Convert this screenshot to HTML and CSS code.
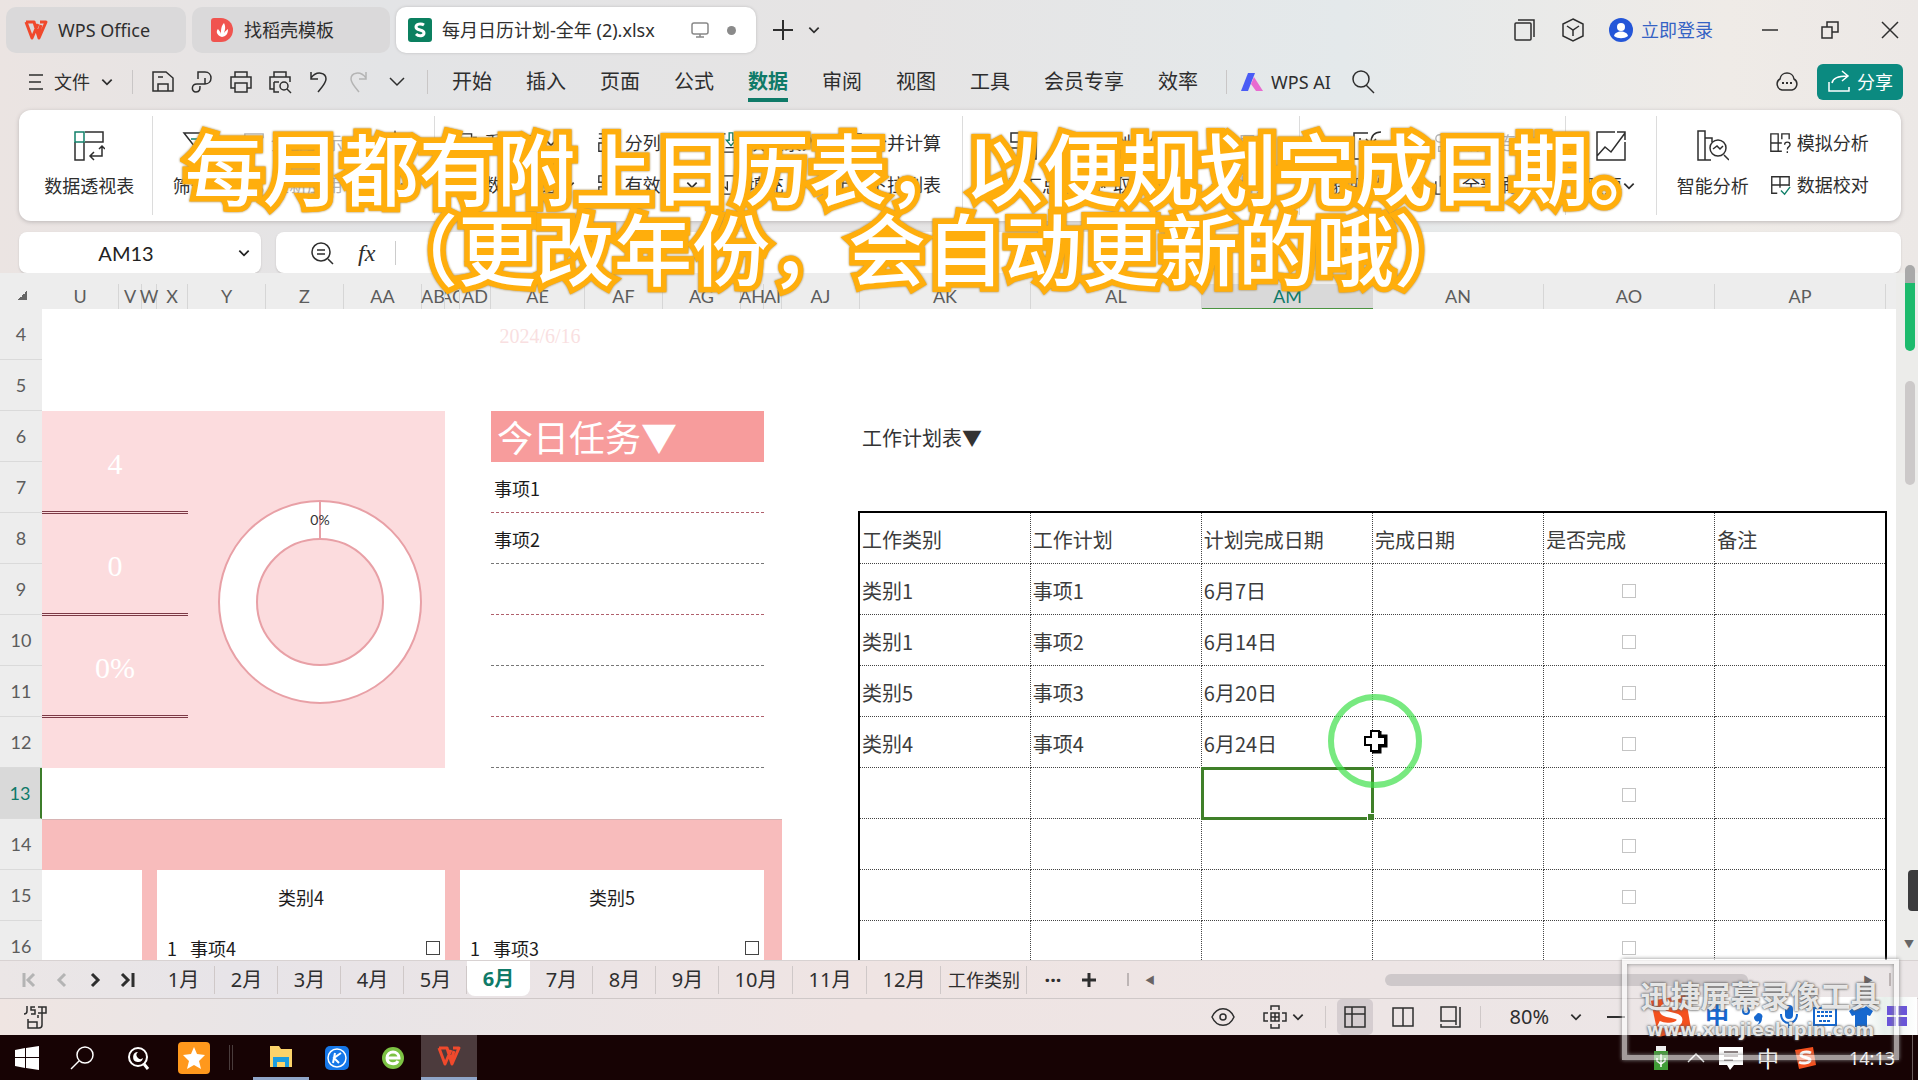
FILE: index.html
```html
<!DOCTYPE html>
<html lang="zh-CN">
<head>
    <meta charset="UTF-8">
    <meta name="viewport" content="width=device-width, initial-scale=1.0">
    <title>每月日历计划-全年 (2).xlsx</title>
    <link rel="stylesheet" href="styles.css">
</head>
<body>
    <svg class="sprite">
        <symbol id="chevron" viewBox="0 0 12 12"><path d="M2 4l4 4 4-4"/></symbol>
        <symbol id="wps" viewBox="0 0 24 20"><path d="M2 2h8l4 12 3-9M2 2l6 16 6-14M10 2l5 16 7-16h-6" fill="none" stroke="#f0492c" stroke-width="3" stroke-linejoin="round"/></symbol>
        <symbol id="search" viewBox="0 0 24 24"><circle cx="10" cy="9" r="8"/><path d="M15 15l8 8"/></symbol>
        <symbol id="sogou" viewBox="0 0 24 24"><path d="M2 4l18-3 3 18-17 4z" fill="#f4511e" stroke="none"/><path d="M18 7c-4-2-10-1-10 2s9 2 9 5-7 4-11 2" fill="none" stroke="#fff" stroke-width="3"/></symbol>
    </svg>

    <!-- title bar -->
    <header class="titlebar">
        <button class="doc-tab tab-home"><svg class="icon-wps"><use href="#wps"/></svg>WPS Office</button>
        <button class="doc-tab tab-docer">
            <svg class="icon-doc" viewBox="0 0 22 24"><path d="M0 3q0-3 3-3h7a12 12 0 010 24H3q-3 0-3-3z" fill="#f0544f" stroke="none"/><path d="M11 19c-6-2-6-6-4-8 1 2 3 3 3 5 0-4 0-8 3-11 2 4 1 7 0 10 1-2 3-3 4-4 0 4-1 7-6 8z" fill="#fff" stroke="none"/></svg>找稻壳模板
        </button>
        <button class="doc-tab tab-file active">
            <svg class="icon-doc" viewBox="0 0 24 24"><rect width="24" height="24" rx="3" fill="#0b8060" stroke="none"/><path d="M16 7c-3-2-8-1-8 2 0 4 8 2 8 6 0 3-5 4-8 1" fill="none" stroke="#fff" stroke-width="3"/></svg>
            <span class="file-name">每月日历计划-全年 (2).xlsx</span>
            <svg class="icon-small" viewBox="0 0 18 18"><rect x="1" y="2" width="16" height="11" rx="2"/><path d="M5 16h8M9 13v3"/></svg>
            <span class="dot"></span>
        </button>
        <button class="new-tab" aria-label="新建"><svg class="icon" viewBox="0 0 24 24"><path d="M12 2v20M2 12h20" stroke-width="2"/></svg></button>
        <button aria-label="更多"><svg class="icon-chev"><use href="#chevron"/></svg></button>
        <div class="window-tools">
            <button aria-label="窗口"><svg class="icon" viewBox="0 0 24 24"><rect x="2" y="5" width="16" height="17" rx="1"/><path d="M5 2h16v17"/></svg></button>
            <button aria-label="应用"><svg class="icon" viewBox="0 0 24 24"><path d="M12 1l10 5v12l-10 5-10-5V6zM6 8l6 4 6-4M12 12v6"/></svg></button>
            <button class="login"><svg class="icon" viewBox="0 0 24 24"><circle cx="12" cy="12" r="12" fill="#2456d8" stroke="none"/><circle cx="12" cy="9" r="4" fill="#fff" stroke="none"/><path d="M5 18c1-6 13-6 14 0-4 3-10 3-14 0z" fill="#fff" stroke="none"/></svg>立即登录</button>
            <button class="win" aria-label="最小化"><svg class="icon-small" viewBox="0 0 18 18"><path d="M1 9h16"/></svg></button>
            <button class="win" aria-label="还原"><svg class="icon-small" viewBox="0 0 18 18"><path d="M1 6h10v11H1zM6 6V1h11v10h-6"/></svg></button>
            <button class="win" aria-label="关闭"><svg class="icon-small" viewBox="0 0 18 18"><path d="M1 1l16 16M17 1L1 17"/></svg></button>
        </div>
    </header>

    <!-- menu -->
    <nav class="menubar">
        <button class="file-menu"><svg class="icon-small" viewBox="0 0 18 18"><path d="M3 2h14M3 9h12M3 16h14"/></svg>文件<svg class="icon-chev"><use href="#chevron"/></svg></button>
        <div class="quick">
            <button aria-label="保存"><svg class="icon" viewBox="0 0 24 24"><path d="M2 2h13l7 6v13H2zM7 21v-7h10v7M7 7h5"/></svg></button>
            <button aria-label="导出"><svg class="icon" viewBox="0 0 24 24"><path d="M8 9V2h7c8 0 8 12 0 12H7c-6 0-6 8-1 8 4 0 4-3 4-6M15 8v6"/></svg></button>
            <button aria-label="打印"><svg class="icon" viewBox="0 0 24 24"><path d="M6 7V2h12v5M6 18H2V7h20v11h-4M6 13h12v9H6z"/></svg></button>
            <button aria-label="打印预览"><svg class="icon" viewBox="0 0 24 24"><path d="M6 7V2h12v5M6 19H2V7h20v5M6 12v10h5M6 12h5"/><circle cx="16" cy="16" r="4"/><path d="M19 19l4 4"/></svg></button>
            <button aria-label="撤销"><svg class="icon" viewBox="0 0 24 24"><path d="M4 2v7h7M4 8c6-8 15-5 15 1 0 4-4 8-8 13"/></svg></button>
            <button class="off" aria-label="恢复"><svg class="icon" viewBox="0 0 24 24"><path d="M20 2v7h-7M20 8C14 0 5 3 5 9c0 4 4 8 8 13"/></svg></button>
            <button aria-label="更多命令"><svg class="icon" viewBox="0 0 24 24"><path d="M5 8l7 7 7-7"/></svg></button>
        </div>
        <div class="menu-tabs">
            <button>开始</button>
            <button>插入</button>
            <button>页面</button>
            <button>公式</button>
            <button class="active">数据</button>
            <button>审阅</button>
            <button>视图</button>
            <button>工具</button>
            <button>会员专享</button>
            <button>效率</button>
        </div>
        <div class="ai">
            <button>
                <svg class="icon" viewBox="0 0 24 20"><path d="M8 1h7L8 19H1z" fill="#4a5cf5" stroke="none"/><path d="M14 5l9 14h-7l-5-7z" fill="#e86bd0" stroke="none"/></svg>WPS AI
            </button>
            <button aria-label="搜索"><svg class="icon"><use href="#search"/></svg></button>
        </div>
        <div class="share-area">
            <button aria-label="云"><svg class="icon" viewBox="0 0 24 24"><path d="M7 20a6 6 0 01-2-11c1-8 13-8 14 0a6 6 0 01-2 11z"/><path d="M7 13h2M11 13h2M15 13h2" stroke-width="2"/></svg></button>
            <button class="share"><svg class="icon" viewBox="0 0 24 24"><path d="M2 12v9h20v-4M5 13c1-5 6-7 15-7M15 1l6 5-6 5"/></svg>分享</button>
        </div>
    </nav>

    <!-- ribbon -->
    <section class="ribbon">
        <div class="group g-pivot">
            <button class="big"><svg class="icon-big" viewBox="0 0 32 32"><path d="M12 2h18v10H12M2 12v18h9V12"/><path d="M2 2h9v10H2z" stroke="#12806a"/><path d="M29 17v9H18M26 19l3-3 3 3M21 22l-4 4 4 4"/></svg>数据透视表</button>
        </div>
        <div class="group g-filter">
            <button class="big"><svg class="icon-big" viewBox="0 0 32 32"><path d="M2 3h28L19 17v12l-6-4v-8z"/><path d="M9 9h14" stroke="#12806a"/></svg><span>筛选<svg class="icon-chev"><use href="#chevron"/></svg></span></button>
            <div class="pair off">
                <button><svg class="icon" viewBox="0 0 24 24"><path d="M2 2h20v4l-7 7v8H9v-8L2 6z"/></svg>全部显示</button>
                <button><svg class="icon" viewBox="0 0 24 24"><path d="M2 2h20l-8 9v10M18 14a4 4 0 11-3 7"/></svg>重新应用</button>
            </div>
            <button class="big"><svg class="icon-big" viewBox="0 0 32 32"><path d="M8 3v26M3 24l5 5 5-5M18 14l5-12 5 12M18 18h10L18 29h10"/></svg><span>排序<svg class="icon-chev"><use href="#chevron"/></svg></span></button>
        </div>
        <div class="group g-data">
            <div class="pair">
                <button><svg class="icon" viewBox="0 0 24 24"><path d="M2 2h15v19H2z"/><path d="M5 7h9" stroke="#12806a"/><path d="M18 6h4v15h-5"/></svg>重复项<svg class="icon-chev"><use href="#chevron"/></svg></button>
                <button><svg class="icon" viewBox="0 0 24 24"><path d="M2 3h8v18H2zM14 3h8v18h-8z"/></svg>数据对比<svg class="icon-chev"><use href="#chevron"/></svg></button>
            </div>
            <div class="pair">
                <button><svg class="icon" viewBox="0 0 24 24"><path d="M2 2h8M2 7h8M2 12h8v9H2zM14 2h8v5h-8zM14 12h8v9h-8z"/></svg>分列</button>
                <button><svg class="icon" viewBox="0 0 24 24"><path d="M2 2h8v7H2zM2 14h8v7H2zM14 6l3 3 5-6M14 18l3 3 5-6"/></svg>有效性<svg class="icon-chev"><use href="#chevron"/></svg></button>
            </div>
            <div class="pair">
                <button><svg class="icon" viewBox="0 0 24 24"><path d="M6 2H2v20h20V2h-4M6 17h12"/><path d="M10 1h4v8h3l-5 6-5-6h3z" stroke="#12806a"/></svg>快速录入</button>
                <button><svg class="icon" viewBox="0 0 24 24"><path d="M2 2h20v20H2zM8 8v9l-3-3M15 8v9l3-3"/></svg>填充<svg class="icon-chev"><use href="#chevron"/></svg></button>
            </div>
            <div class="pair">
                <button><svg class="icon" viewBox="0 0 24 24"><path d="M2 6h14v15H2zM8 2h14v13"/></svg>合并计算</button>
                <button><svg class="icon" viewBox="0 0 24 24"><path d="M2 3h20v7H2zM2 10v11h20V10M14 6h4"/></svg>下拉列表</button>
            </div>
        </div>
        <div class="group g-outline">
            <button class="big"><svg class="icon-big" viewBox="0 0 32 32"><path d="M3 3h16v9H3zM3 18h16v11H3zM23 3h5v26h-5"/></svg>分类汇总</button>
            <div class="pair">
                <button><svg class="icon" viewBox="0 0 24 24"><path d="M5 2h10v8H5zM5 14h10v8H5zM18 3h4v18h-4"/></svg>创建组</button>
                <button><svg class="icon" viewBox="0 0 24 24"><path d="M5 2h10v8H5zM5 14h10v8H5zM18 9l4 6M22 9l-4 6"/></svg>取消组合</button>
            </div>
            <div class="pair off">
                <button><svg class="icon" viewBox="0 0 24 24"><path d="M2 2h12v8H2zM18 6h5"/></svg>展开</button>
                <button><svg class="icon" viewBox="0 0 24 24"><path d="M2 12h12v8H2zM18 16h5"/></svg>折叠</button>
            </div>
        </div>
        <div class="group g-import">
            <button class="big"><svg class="icon-big" viewBox="0 0 32 32"><path d="M17 3H3v26h26V17M8 9h2M8 15h2M8 21h2M14 21h10M30 2c-7 0-10 4-10 11M15 9l5 5 5-5"/></svg>获取数据</button>
            <div class="pair">
                <button class="off"><svg class="icon" viewBox="0 0 24 24"><path d="M6 3h10a4 4 0 010 8H6a4 4 0 010-8zM5 16h9v5H5z"/></svg>编辑连接</button>
                <button><svg class="icon" viewBox="0 0 24 24"><path d="M2 8v14h6M7 2h14v9M7 2v12"/><path d="M21 18a5 5 0 11-2-4" stroke="#12806a"/></svg>全部刷新</button>
            </div>
        </div>
        <div class="group g-stock">
            <button class="big"><svg class="icon-big" viewBox="0 0 32 32"><path d="M20 2H2v28h28V12M2 26l8-9 6 5L30 3M22 2h8v8"/></svg><span>股票<svg class="icon-chev"><use href="#chevron"/></svg></span></button>
        </div>
        <div class="group g-analysis">
            <button class="big"><svg class="icon-big" viewBox="0 0 32 32"><path d="M1 1h7v29H1zM8 8h7v4M8 30h6M27 25l5 5"/><circle cx="21" cy="18" r="8"/><path d="M16 19l4-3 3 3 3-3"/></svg>智能分析</button>
            <div class="pair">
                <button><svg class="icon" viewBox="0 0 24 24"><path d="M10 12V2H2v10h12M14 8V2h8v6M2 12v9h12M10 12v9"/><path d="M17 14c0-4 6-4 6 0 0 2-3 2-3 5M20 21v2"/></svg>模拟分析</button>
                <button><svg class="icon" viewBox="0 0 24 24"><path d="M9 21H3V3h19v10M3 12h19M12 3v12"/><path d="M13 18l4 4 6-8" stroke="#12806a"/></svg>数据校对</button>
            </div>
        </div>
    </section>

    <!-- formula bar -->
    <section class="formula-row">
        <div class="name-box">
            <input type="text" value="AM13" aria-label="名称框">
            <svg class="icon-chev"><use href="#chevron"/></svg>
        </div>
        <div class="formula-box">
            <button aria-label="查找"><svg class="icon" viewBox="0 0 24 24"><circle cx="11" cy="11" r="9"/><path d="M7 9h8M7 13h8M18 18l5 5"/></svg></button>
            <button class="fx">fx</button>
            <input type="text" aria-label="编辑栏">
        </div>
    </section>

    <!-- sheet -->
    <main class="sheet">
        <div class="corner"></div>
        <div class="col-heads">
            <span>U</span><span>V</span><span>W</span><span>X</span><span>Y</span><span>Z</span><span>AA</span><span>AB</span><span class="narrow">AC</span><span>AD</span><span>AE</span><span>AF</span><span>AG</span><span>AH</span><span>AI</span><span>AJ</span><span>AK</span><span>AL</span><span class="selected">AM</span><span>AN</span><span>AO</span><span>AP</span>
        </div>
        <div class="row-heads">
            <span>4</span><span>5</span><span>6</span><span>7</span><span>8</span><span>9</span><span>10</span><span>11</span><span>12</span><span class="selected">13</span><span>14</span><span>15</span><span>16</span>
        </div>
        <div class="cells">
            <div class="today">2024/6/16</div>

            <div class="summary">
                <div class="stats">
                    <div>4</div>
                    <div>0</div>
                    <div>0%</div>
                </div>
                <svg class="donut" viewBox="0 0 206 206">
                    <circle cx="103" cy="103" r="82" fill="none" stroke="#fff" stroke-width="38"/>
                    <g fill="none" stroke="#e8a0a6" stroke-width="2">
                        <circle cx="103" cy="103" r="101"/>
                        <circle cx="103" cy="103" r="63"/>
                        <path d="M103 2v38"/>
                    </g>
                    <text x="103" y="26" text-anchor="middle">0%</text>
                </svg>
            </div>

            <div class="task-title">今日任务▼</div>
            <ul class="tasks">
                <li>事项1</li>
                <li>事项2</li>
                <li></li>
                <li></li>
                <li></li>
                <li></li>
            </ul>

            <div class="board"></div>
            <div class="card card-left"></div>
            <div class="card card-4">
                <h3>类别4</h3>
                <label><b>1</b>事项4<input type="checkbox"></label>
            </div>
            <div class="card card-5">
                <h3>类别5</h3>
                <label><b>1</b>事项3<input type="checkbox"></label>
            </div>

            <div class="plan-title">工作计划表▼</div>
            <table class="plan">
                <tr><th>工作类别</th><th>工作计划</th><th>计划完成日期</th><th>完成日期</th><th>是否完成</th><th>备注</th></tr>
                <tr><td>类别1</td><td>事项1</td><td>6月7日</td><td></td><td class="check"><input type="checkbox" aria-label="是否完成"></td><td></td></tr>
                <tr><td>类别1</td><td>事项2</td><td>6月14日</td><td></td><td class="check"><input type="checkbox" aria-label="是否完成"></td><td></td></tr>
                <tr><td>类别5</td><td>事项3</td><td>6月20日</td><td></td><td class="check"><input type="checkbox" aria-label="是否完成"></td><td></td></tr>
                <tr><td>类别4</td><td>事项4</td><td>6月24日</td><td></td><td class="check"><input type="checkbox" aria-label="是否完成"></td><td></td></tr>
                <tr><td></td><td></td><td></td><td></td><td class="check"><input type="checkbox" aria-label="是否完成"></td><td></td></tr>
                <tr><td></td><td></td><td></td><td></td><td class="check"><input type="checkbox" aria-label="是否完成"></td><td></td></tr>
                <tr><td></td><td></td><td></td><td></td><td class="check"><input type="checkbox" aria-label="是否完成"></td><td></td></tr>
                <tr><td></td><td></td><td></td><td></td><td class="check"><input type="checkbox" aria-label="是否完成"></td><td></td></tr>
            </table>
            <div class="selection">
                <svg class="pointer" viewBox="0 0 96 96">
                    <circle cx="48" cy="48" r="44" fill="none" stroke="#3fe04a" stroke-opacity=".7" stroke-width="6"/>
                    <path d="M53 38v5h6v10h-6v6h-8" fill="none" stroke="#000" stroke-width="3"/>
                    <path d="M44 38h8v6h6v8h-6v6h-8v-6h-6v-8h6z" fill="#fff" stroke="#000" stroke-width="2"/>
                </svg>
            </div>
        </div>
        <div class="vscroll">
            <i class="level"></i>
            <i class="thumb"></i>
            <i class="handle"></i>
            <i class="down">▼</i>
        </div>
    </main>

    <!-- sheet tabs -->
    <nav class="sheet-tabs">
        <div class="tab-nav">
            <button class="off" aria-label="第一张"><svg class="icon-small" viewBox="0 0 18 18"><path d="M4 2v14M14 3L8 9l6 6"/></svg></button>
            <button class="off" aria-label="上一张"><svg class="icon-small" viewBox="0 0 18 18"><path d="M12 3L6 9l6 6"/></svg></button>
            <button aria-label="下一张"><svg class="icon-small" viewBox="0 0 18 18"><path d="M6 3l6 6-6 6"/></svg></button>
            <button aria-label="最后一张"><svg class="icon-small" viewBox="0 0 18 18"><path d="M3 3l6 6-6 6M14 2v14"/></svg></button>
        </div>
        <button class="tab">1月</button>
        <button class="tab">2月</button>
        <button class="tab">3月</button>
        <button class="tab">4月</button>
        <button class="tab">5月</button>
        <button class="tab active">6月</button>
        <button class="tab">7月</button>
        <button class="tab">8月</button>
        <button class="tab">9月</button>
        <button class="tab wide">10月</button>
        <button class="tab wide">11月</button>
        <button class="tab wide">12月</button>
        <button class="tab long">工作类别</button>
        <button class="more">···</button>
        <button class="more" aria-label="新建工作表"><svg class="icon-small" viewBox="0 0 18 18"><path d="M9 2v14M2 9h14" stroke-width="3"/></svg></button>
        <div class="hscroll">
            <i class="bar"></i><i class="arrow">◀</i><div class="track"><i></i></div><i class="arrow">▶</i><i class="bar"></i>
        </div>
    </nav>

    <!-- status bar -->
    <footer class="status">
        <svg class="icon jst" viewBox="0 0 24 24"><path d="M3 1v5q0 3-3 3M11 2H7v3h4v4H7M14 2h8v6h-8M18 2v18q0 3-3 3H4v-9M4 17h9v6M14 13v-3"/></svg>
        <div class="status-right">
            <button class="eye" aria-label="护眼"><svg class="icon" viewBox="0 0 24 24"><path d="M1 12c5-11 17-11 22 0-5 11-17 11-22 0z"/><circle cx="12" cy="12" r="3"/></svg></button>
            <button class="cross" aria-label="阅读"><svg class="icon" viewBox="0 0 24 24"><path d="M8 8h8v8H8zM8 5V1h8v4M8 19v4h8v-4M5 8H1v8h4M19 8h4v8h-4M12 8v8M8 12h8"/></svg><svg class="icon-chev"><use href="#chevron"/></svg></button>
            <div class="views">
                <button class="active" aria-label="普通视图"><svg class="icon" viewBox="0 0 24 24"><path d="M2 2h20v20H2zM2 9h20M9 2v20"/></svg></button>
                <button aria-label="分页预览"><svg class="icon" viewBox="0 0 24 24"><path d="M2 3h20v18H2zM12 3v18"/></svg></button>
                <button aria-label="页面布局"><svg class="icon" viewBox="0 0 24 24"><path d="M2 2h15v14H2zM21 2v20H2v-3M17 20v-4"/></svg></button>
            </div>
            <button class="zoom">80%<svg class="icon-chev"><use href="#chevron"/></svg></button>
            <button class="minus" aria-label="缩小"><svg class="icon-small" viewBox="0 0 18 18"><path d="M0 9h18" stroke-width="2"/></svg></button>
        </div>
    </footer>

    <!-- taskbar -->
    <footer class="taskbar">
        <button aria-label="开始"><svg class="icon" viewBox="0 0 24 24"><path d="M0 4l10-2v9H0zM11 2l13-2v11H11zM0 12h10v10L0 20zM11 12h13v12l-13-2z" fill="#fff" stroke="none"/></svg></button>
        <button aria-label="搜索"><svg class="icon" viewBox="0 0 24 24"><circle cx="15" cy="9" r="8"/><path d="M9 15l-8 8"/></svg></button>
        <button aria-label="查找"><svg class="icon" viewBox="0 0 24 24"><circle cx="12" cy="11" r="9" stroke-width="2"/><path d="M18 18l4 5" stroke-width="3"/><path d="M12 6a5 5 0 105 6 3 3 0 01-5-6z" fill="#fff" stroke="none"/></svg></button>
        <button aria-label="收藏"><svg class="icon-big" viewBox="0 0 32 32"><rect width="32" height="32" rx="4" fill="#ff981c" stroke="none"/><path d="M16 5l3 7 8 1-6 6 2 8-7-4-7 4 2-8-6-6 8-1z" fill="#fff" stroke="none"/></svg></button>
        <i class="split"></i>
        <button class="running" aria-label="文件夹"><svg class="icon" viewBox="0 0 24 24"><path d="M1 2h9l2 3h11v18H1z" fill="#fbd36a" stroke="none"/><path d="M4 13h16v10h-4v-5H8v5H4z" fill="#1c9de0" stroke="none"/></svg></button>
        <button aria-label="K"><svg class="icon" viewBox="0 0 24 24"><rect width="24" height="24" rx="5" fill="#1677e8" stroke="none"/><circle cx="12" cy="12" r="9"/><path d="M10 7l-2 10M16 7l-7 5 5 5" stroke-width="2"/></svg></button>
        <button aria-label="浏览器"><svg class="icon" viewBox="0 0 24 24"><circle cx="12" cy="12" r="11" fill="#7cc243" stroke="none"/><path d="M6 12h12c0-8-12-8-12 0 0 7 9 7 11 3" stroke-width="3"/></svg></button>
        <button class="running current" aria-label="WPS"><svg class="icon-wps"><use href="#wps"/></svg></button>
        <div class="tray">
            <svg class="icon" viewBox="0 0 24 24"><path d="M7 0h10v5H7z" fill="#eee" stroke="none"/><path d="M5 5h14v19H5z" fill="#3f9c35" stroke="none"/><path d="M12 8v13M8 12v3l4 3 4-3v-3"/></svg>
            <svg class="icon-small" viewBox="0 0 18 18"><path d="M1 13l8-8 8 8"/></svg>
            <svg class="icon" viewBox="0 0 24 24"><path d="M0 1h24v18h-9l-4 5-3-5H0z" fill="#fff" stroke="none"/><path d="M5 6h14M5 10h14M5 14h9" stroke="#170304" stroke-width="1"/></svg>
            <span class="ime">中</span>
            <svg class="icon"><use href="#sogou"/></svg>
            <time>14:13</time>
        </div>
    </footer>

    <!-- input method bar -->
    <div class="ime-bar">
        <svg class="ime-logo"><use href="#sogou"/></svg>
        <b>中</b>
        <svg class="icon" viewBox="0 0 24 24"><circle cx="5" cy="7" r="3" fill="none" stroke="#1668cf" stroke-width="2"/><path d="M15 11a3 3 0 116 3c0 4-2 6-5 7 2-2 2-3 2-4a3 3 0 01-3-6z"/></svg>
        <svg class="icon" viewBox="0 0 24 24"><rect x="8" y="1" width="8" height="14" rx="4"/><path d="M4 10c0 12 16 12 16 0M12 19v5" fill="none" stroke="#1668cf" stroke-width="2"/></svg>
        <svg class="icon" viewBox="0 0 24 24"><path d="M1 4h22v17H1z" fill="none" stroke="#1668cf" stroke-width="2"/><path d="M4 8h16M4 12h16M6 17h12" stroke="#1668cf" stroke-width="2" stroke-dasharray="3 1"/></svg>
        <svg class="icon" viewBox="0 0 24 24"><path d="M7 2c2 3 8 3 10 0l7 5-3 5-3-1v12H6V11l-3 1-3-5z"/></svg>
        <svg class="icon" viewBox="0 0 24 24"><path d="M2 2h9v9H2zM13 2h9v9h-9zM2 13h9v9H2zM13 13h9v9h-9z" fill="#6a55d8"/></svg>
    </div>

    <!-- recorder mark -->
    <div class="mark">
        <strong>迅捷屏幕录像工具</strong>
        <span>www.xunjieshipin.com</span>
    </div>

    <!-- video caption -->
    <p class="caption">每月都有附上日历表，以便规划完成日期。<br>（更改年份，会自动更新的哦）</p>
</body>
</html>
```
FILE: styles.css
```css
* {
    margin: 0;
    padding: 0;
    box-sizing: border-box;
}

body {
    display: flex;
    flex-direction: column;
    position: relative;
    height: 100vh;
    overflow: hidden;
    font-family: "Noto Sans", "Noto Sans CJK SC", sans-serif;
    font-size: 18px;
    line-height: 24px;
    color: #2e2e2e;
    background: linear-gradient(90deg, #ebe4e2, #e3e4e6 20%, #e6e4e4 45%, #e4e9eb 70%, #efebe7 90%, #ece8e6);
}

button {
    display: flex;
    align-items: center;
    justify-content: center;
    border: none;
    background: none;
    font: inherit;
    color: inherit;
    white-space: nowrap;
}

input {
    border: none;
    background: none;
    font: inherit;
    color: inherit;
}

svg {
    flex: none;
    fill: none;
    stroke: currentColor;
    stroke-width: 1.5;
}

.sprite {
    position: absolute;
    width: 0;
    height: 0;
}

.icon {
    width: 24px;
    height: 24px;
}

.icon-small {
    width: 18px;
    height: 18px;
}

.icon-big {
    width: 32px;
    height: 32px;
}

.icon-chev {
    width: 14px;
    height: 14px;
}

.icon-wps {
    width: 24px;
    height: 20px;
}

.off {
    color: #b4b4b4;
}

/* title bar */
.titlebar {
    display: flex;
    align-items: center;
    height: 58px;
    padding: 2px 19px 0 6px;
}

.doc-tab {
    height: 46px;
    justify-content: flex-start;
    gap: 10px;
    padding: 0 18px;
    margin-right: 6px;
    border-radius: 10px;
    background: #dad9da;
}

.tab-home {
    width: 180px;
}

.tab-docer {
    width: 198px;
}

.tab-file {
    width: 360px;
    padding: 0 12px;
}

.doc-tab.active {
    background: #fff;
    box-shadow: 0 0 3px #bbb;
}

.icon-doc {
    width: 24px;
    height: 24px;
}

.doc-tab .icon-small {
    color: #888;
}

.file-name {
    flex: 1;
    text-align: left;
}

.dot {
    width: 9px;
    height: 9px;
    margin: 0 8px;
    border-radius: 50%;
    background: #8a8a8a;
}

.new-tab {
    margin: 0 12px 0 9px;
}

.window-tools {
    display: flex;
    align-items: center;
    gap: 24px;
    margin-left: auto;
}

.login {
    gap: 8px;
    color: #3462c4;
}

.win {
    margin-left: 18px;
}

.login + .win {
    margin-left: 24px;
}

/* menu */
.menubar {
    display: flex;
    align-items: center;
    height: 52px;
    padding: 0 15px 4px 26px;
}

.file-menu {
    gap: 10px;
    padding-right: 18px;
    border-right: 1px solid #c9c6c6;
}

.quick {
    display: flex;
    gap: 15px;
    padding: 0 18px;
    border-right: 1px solid #c9c6c6;
}

.menu-tabs {
    display: flex;
    gap: 34px;
    padding: 0 28px 0 24px;
    font-size: 20px;
    border-right: 1px solid #c9c6c6;
}

.menu-tabs .active {
    margin: -8px 0;
    color: #0f7a68;
    font-weight: bold;
    background: linear-gradient(#0f7a68, #0f7a68) bottom / 100% 4px no-repeat;
}

.ai {
    display: flex;
    gap: 20px;
    padding-left: 13px;
}

.ai button {
    gap: 7px;
}

.share-area {
    display: flex;
    align-items: center;
    gap: 18px;
    margin-left: auto;
}

.share {
    gap: 6px;
    width: 86px;
    height: 36px;
    border-radius: 6px;
    color: #fff;
    background: #0b8a80;
}

/* ribbon */
.ribbon {
    display: flex;
    height: 111px;
    margin: 0 17px 0 19px;
    padding: 6px 0;
    border-radius: 12px;
    background: #fff;
    box-shadow: 0 1px 4px #bbb6b6;
}

.group {
    display: flex;
    align-items: center;
    justify-content: space-evenly;
    flex: 1 1 0;
    min-width: 0;
    padding-bottom: 3px;
    overflow: hidden;
}

.group + .group {
    border-left: 1px solid #dcdcdc;
}

.g-pivot {
    flex-grow: 133;
}

.g-pivot .big {
    margin-left: 8px;
}

.g-filter {
    flex-grow: 282;
}

.g-data {
    flex-grow: 529;
}

.g-outline {
    flex-grow: 337;
}

.g-import {
    flex-grow: 266;
}

.g-stock {
    flex-grow: 90;
}

.g-analysis {
    flex-grow: 245;
    justify-content: flex-start;
    gap: 20px;
}

.g-analysis .big {
    margin-left: 20px;
}

.big {
    flex-direction: column;
    gap: 12px;
}

.pair {
    display: flex;
    flex-direction: column;
    align-items: flex-start;
    gap: 18px;
}

.pair button {
    gap: 6px;
}

.pair .icon {
    width: 22px;
}

/* formula bar */
.formula-row {
    display: flex;
    gap: 15px;
    height: 41px;
    margin: 11px 17px 0 19px;
}

.name-box,
.formula-box {
    display: flex;
    align-items: center;
    border-radius: 8px;
    background: #fff;
    box-shadow: 0 1px 2px #c4c0c0;
}

.name-box {
    width: 242px;
    padding-right: 10px;
    font-family: Lato, sans-serif;
    font-size: 20px;
    color: #222;
}

.name-box input {
    flex: 1;
    min-width: 0;
    padding-right: 4px;
    text-align: center;
}

.formula-box {
    flex: 1;
    padding-left: 34px;
}

.formula-box input {
    flex: 1;
    border-left: 1px solid #ccc;
}

.fx {
    padding: 0 20px 0 24px;
    font-family: "Liberation Serif", serif;
    font-size: 24px;
    font-style: italic;
}

/* sheet */
.sheet {
    --cols: minmax(0, 77fr) minmax(0, 23fr) minmax(0, 15fr) minmax(0, 31fr) repeat(3, minmax(0, 78fr)) minmax(0, 23fr) minmax(0, 15fr) minmax(0, 31fr) minmax(0, 94fr) repeat(2, minmax(0, 78fr)) minmax(0, 23fr) minmax(0, 18fr) minmax(0, 78fr) repeat(6, minmax(0, 171fr)) minmax(0, 10fr);
    display: grid;
    grid-template-columns: 42px minmax(0, 1fr) 22px;
    grid-template-rows: 36px minmax(0, 1fr);
    flex: 1;
    min-height: 0;
    font-size: 18px;
}

.corner {
    background: linear-gradient(135deg, transparent 50%, #666 50%) 18px 18px / 9px 9px no-repeat #ededed;
}

.col-heads {
    display: grid;
    grid-template-columns: var(--cols);
    padding-top: 11px;
    background: #ededed;
    font-family: Lato, sans-serif;
    color: #5c5c5c;
}

.col-heads span {
    display: flex;
    justify-content: center;
    border-right: 1px solid #d6d6d6;
}

.col-heads .narrow {
    overflow: hidden;
}

.col-heads .selected {
    color: #0f7a68;
    background: #d9d9d9;
    border-right: none;
    border-bottom: 2px solid #4b9440;
}

.row-heads {
    display: flex;
    flex-direction: column;
    overflow: hidden;
    background: #ededed;
    font-family: Lato, sans-serif;
    color: #5c5c5c;
}

.row-heads span {
    flex: none;
    height: 51px;
    line-height: 50px;
    text-align: center;
    border-bottom: 1px solid #dadada;
}

.row-heads .selected {
    color: #0f7a68;
    background: #d9d9d9;
    border-right: 2px solid #3c7d2a;
}

.cells {
    display: grid;
    grid-template-columns: var(--cols);
    grid-template-rows: repeat(13, 51px);
    overflow: hidden;
    background: #fff;
    font-family: "Noto Sans CJK SC", sans-serif;
    color: #1c1c1c;
}

.today {
    grid-area: 1 / 11 / 2 / 12;
    place-self: center;
    padding: 2px 0 0 4px;
    font-family: "Liberation Serif", serif;
    font-size: 20px;
    color: #f9dfe1;
}

.summary {
    grid-area: 3 / 1 / 10 / 9;
    display: grid;
    grid-template-columns: 146fr 257fr;
    background: #fcdcde;
}

.stats {
    display: flex;
    flex-direction: column;
    padding-top: 1px;
}

.stats div {
    height: 102px;
    line-height: 104px;
    text-align: center;
    font-family: "Liberation Serif", serif;
    font-size: 30px;
    color: #fff;
    border-bottom: 3px double #7c3a46;
}

.donut {
    width: 206px;
    place-self: center;
    margin: 24px 0 0 6px;
}

.donut text {
    font-family: Lato, sans-serif;
    font-size: 14px;
    fill: #333;
    stroke: none;
}

.task-title {
    grid-area: 3 / 11 / 4 / 15;
    padding-left: 6px;
    font-size: 36px;
    line-height: 51px;
    color: #fff;
    background: #f79c9c;
}

.tasks {
    grid-area: 4 / 11 / 10 / 15;
    list-style: none;
}

.tasks li {
    height: 51px;
    padding-left: 3px;
    line-height: 52px;
    border-bottom: 1px dashed #777;
}

.tasks li:nth-child(odd) {
    border-color: #b0606c;
}

.board {
    grid-area: 11 / 1 / 14 / 16;
    border-top: 1px solid #d8b4b4;
    background: #f8bcbc;
}

.card {
    background: #fff;
}

.card-left {
    grid-area: 12 / 1 / 14 / 3;
}

.card-4 {
    grid-area: 12 / 4 / 14 / 9;
}

.card-5 {
    grid-area: 12 / 10 / 14 / 15;
}

.card h3 {
    height: 51px;
    line-height: 54px;
    font-size: 18px;
    font-weight: normal;
    text-align: center;
}

.card label {
    display: flex;
    align-items: center;
    height: 51px;
    padding: 2px 5px 0 10px;
}

.card b {
    width: 23px;
    font-weight: normal;
}

input[type="checkbox"] {
    appearance: none;
    width: 14px;
    height: 14px;
    border: 1px solid #c4c4c4;
    background: #fff;
}

.card input[type="checkbox"] {
    margin-left: auto;
    border-color: #444;
}

.plan-title {
    grid-area: 3 / 17 / 4 / 19;
    padding: 3px 0 0 2px;
    font-size: 20px;
    line-height: 48px;
    color: #333;
}

.plan {
    grid-area: 5 / 17 / 14 / 23;
    width: calc(100% + 3px);
    margin: -2px 0 0 -2px;
    table-layout: fixed;
    border-collapse: collapse;
    border: 2px solid #000;
    border-bottom: none;
    font-size: 20px;
    color: #3c3c3c;
}

.plan tr {
    height: 51px;
}

.plan th,
.plan td {
    padding: 4px 0 0 2px;
    font-weight: normal;
    text-align: left;
    border: 1px dotted #444;
}

.plan .check {
    padding: 2px 0 0;
    text-align: center;
}

.selection {
    grid-area: 10 / 19 / 11 / 20;
    position: relative;
    margin: -1px;
    border: 3px solid #3f8029;
}

.selection::after {
    content: "";
    position: absolute;
    right: -4px;
    bottom: -4px;
    width: 6px;
    height: 6px;
    border: 1px solid #fff;
    background: #3f8029;
}

.pointer {
    position: absolute;
    right: -52px;
    top: -77px;
    width: 96px;
    height: 96px;
}

.vscroll {
    grid-area: 1 / 3 / 3 / 4;
    position: relative;
    background: #ececea;
}

.vscroll i {
    position: absolute;
    right: 3px;
    width: 10px;
    border-radius: 5px;
}

.vscroll .level {
    top: -8px;
    height: 86px;
    background: linear-gradient(#a9a9a9 18px, #1cba6c 18px);
}

.vscroll .thumb {
    top: 108px;
    height: 104px;
    background: #ccc9c9;
}

.vscroll .handle {
    right: 0;
    bottom: 49px;
    height: 41px;
    border-radius: 4px 0 0 4px;
    background: #3c3c3e;
}

.vscroll .down {
    bottom: 4px;
    right: 4px;
    font-size: 10px;
    font-style: normal;
    color: #666;
}

/* sheet tabs */
.sheet-tabs {
    display: flex;
    height: 39px;
    border-top: 1px solid #d8d2d2;
    border-bottom: 1px solid #cfc8c8;
    background: linear-gradient(90deg, #ebe6e6, #e7e4e8 12%, #efe4e3 45%, #ebe6e7);
    font-size: 20px;
}

.tab-nav {
    display: flex;
    gap: 15px;
    width: 152px;
    padding-left: 20px;
}

.tab-nav svg {
    stroke-width: 3;
}

.tab {
    width: 63px;
    background: linear-gradient(#cfc8c8, #cfc8c8) right center / 1px 28px no-repeat;
}

.tab.active {
    color: #0f7a68;
    font-weight: bold;
    background: #fff;
    border-radius: 0 0 8px 8px;
    margin-bottom: 2px;
}

.wide {
    width: 74px;
}

.long {
    width: 86px;
    font-size: 18px;
}

.more {
    width: 36px;
    margin-left: 8px;
    font-weight: bold;
}

.more + .more {
    margin-left: 0;
}

.hscroll {
    display: flex;
    align-items: center;
    gap: 16px;
    flex: 1;
    padding: 0 27px 0 20px;
    color: #6a6464;
}

.hscroll i {
    font-style: normal;
}

.hscroll .arrow {
    font-size: 10px;
}

.hscroll .bar {
    width: 2px;
    height: 13px;
    background: #bdb5b5;
}

.track {
    display: flex;
    flex: 1;
    padding: 0 13% 0 28%;
}

.track i {
    flex: 1;
    height: 12px;
    border-radius: 6px;
    background: #cec8ca;
}

/* status bar */
.status {
    display: flex;
    align-items: center;
    height: 36px;
    padding: 0 293px 0 24px;
    background: linear-gradient(90deg, #efe5e2, #e8e5e7 15%, #efe4e3 45%, #ebe6e7);
}

.status-right {
    display: flex;
    align-items: center;
    gap: 20px;
    margin-left: auto;
}

.eye {
    margin-right: 8px;
}

.cross {
    gap: 4px;
}

.views {
    display: flex;
    gap: 12px;
    padding: 0 12px;
    background: linear-gradient(#cfc8c8, #cfc8c8) left center / 1px 22px no-repeat, linear-gradient(#cfc8c8, #cfc8c8) right center / 1px 22px no-repeat;
}

.views button {
    width: 36px;
    height: 36px;
}

.views .active {
    border-radius: 5px;
    background: #d5cdd0;
}

.status .zoom {
    gap: 20px;
    margin-left: 9px;
    font-size: 20px;
}

.minus {
    margin-left: 4px;
}

/* taskbar */
.taskbar {
    display: flex;
    height: 45px;
    padding-right: 5px;
    color: #fff;
    background: #170304;
}

.taskbar button {
    width: 56px;
}

.taskbar button:first-child {
    width: 54px;
}

.split {
    width: 4px;
    margin: 10px 20px 10px 7px;
    border: solid #4a3c3c;
    border-width: 0 1px;
}

.taskbar .running {
    border-bottom: 3px solid #8fa5c8;
}

.taskbar .current {
    background: #4c3b3d;
}

.tray {
    display: flex;
    align-items: center;
    gap: 14px;
    margin-left: auto;
    padding-right: 17px;
    border-right: 1px solid #6a5c5c;
}

.ime {
    font-size: 22px;
}

.tray time {
    margin-left: 18px;
}

/* input method bar */
.ime-bar {
    position: absolute;
    right: 1px;
    bottom: 45px;
    display: flex;
    align-items: center;
    justify-content: space-between;
    width: 270px;
    height: 38px;
    padding: 0 8px 0 0;
    font-size: 24px;
    color: #1668cf;
    background: linear-gradient(90deg, #ebe6e7, #fff 15%, #fff 80%, #e8f0ec 88%, #fff);
}

.ime-bar svg {
    fill: #1668cf;
    stroke: none;
}

.ime-bar .ime-logo {
    width: 46px;
    height: 46px;
}

/* recorder mark */
.mark {
    position: absolute;
    right: 19px;
    bottom: 20px;
    display: flex;
    flex-direction: column;
    align-items: center;
    width: 277px;
    height: 101px;
    padding-top: 16px;
    border: 5px solid rgba(255, 255, 255, 0.6);
    box-shadow: 0 0 4px #888, inset 0 0 4px #888;
    color: rgba(255, 255, 255, 0.85);
    text-shadow: 0 0 3px #555, 0 0 2px #777;
}

.mark strong {
    font-size: 30px;
    line-height: 32px;
}

.mark span {
    margin-top: 6px;
    font-family: "DejaVu Sans", sans-serif;
    font-size: 18px;
    font-weight: bold;
}

/* video caption */
.caption {
    position: absolute;
    top: 126px;
    left: 0;
    right: 66px;
    font-family: "Noto Sans CJK SC", sans-serif;
    font-size: 78px;
    font-weight: 500;
    line-height: 80px;
    text-align: center;
    white-space: nowrap;
    color: #fff;
    -webkit-text-stroke: 11px #ffae0c;
    paint-order: stroke fill;
    filter: drop-shadow(0 0 1px #a08040);
}
```
